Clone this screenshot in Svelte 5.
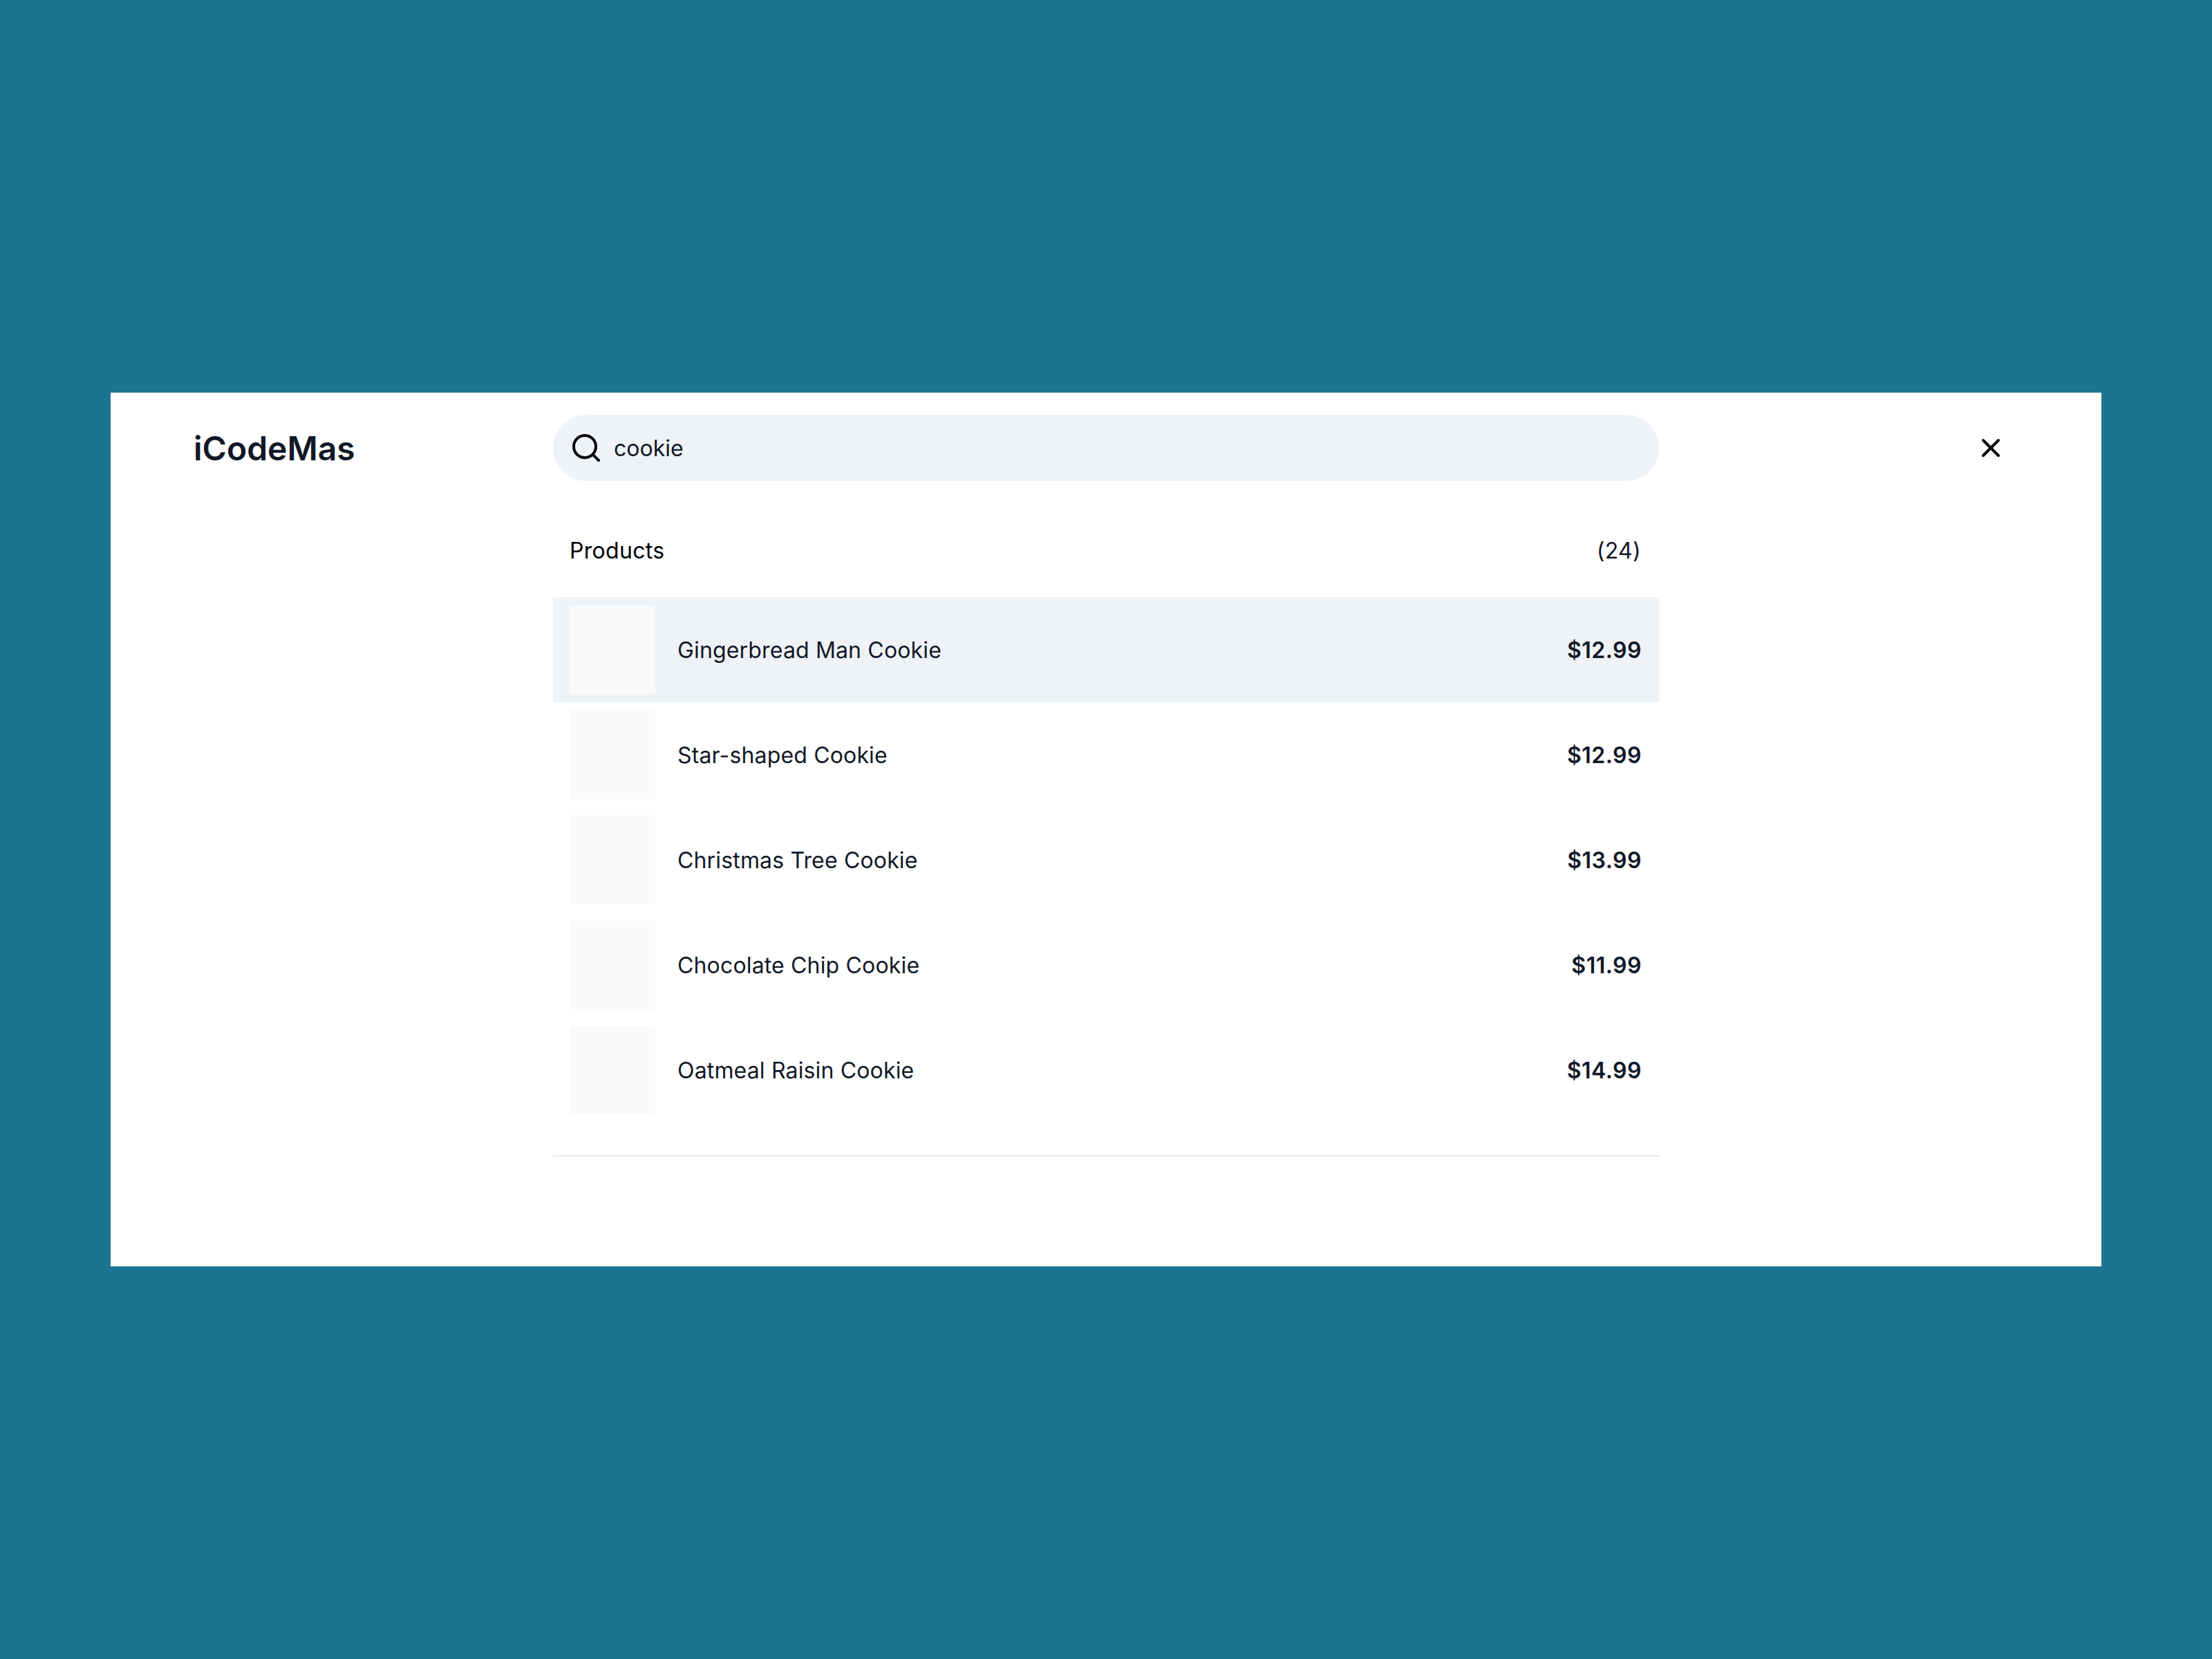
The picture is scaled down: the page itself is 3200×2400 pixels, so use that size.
<script>
  const products = [
    { name: 'Gingerbread Man Cookie', price: '$12.99', active: true },
    { name: 'Star-shaped Cookie', price: '$12.99' },
    { name: 'Christmas Tree Cookie', price: '$13.99' },
    { name: 'Chocolate Chip Cookie', price: '$11.99' },
    { name: 'Oatmeal Raisin Cookie', price: '$14.99' }
  ];
</script>

<div class="page">
  <div class="panel">
    <div class="logo">iCodeMas</div>
    <div class="main">
      <div class="search">
        <svg class="search-icon" viewBox="0 0 24 24" fill="none" stroke="#000" stroke-width="2" stroke-linecap="round" stroke-linejoin="round">
          <circle cx="11" cy="11" r="8" />
          <path d="m21 21-4.35-4.35" />
        </svg>
        <span class="query">cookie</span>
      </div>
      <div class="heading">
        <span class="title">Products</span>
        <span class="count">(24)</span>
      </div>
      <ul class="list">
        {#each products as p}
          <li class="row" class:active={p.active}>
            <div class="thumb"></div>
            <span class="name">{p.name}</span>
            <span class="price">{p.price}</span>
          </li>
        {/each}
      </ul>
    </div>
    <button class="close" aria-label="Close">
      <svg viewBox="0 0 24 24" fill="none" stroke="#000" stroke-width="2" stroke-linecap="round" stroke-linejoin="round">
        <path d="M17.5 6.5 6.5 17.5M6.5 6.5l11 11" />
      </svg>
    </button>
  </div>
</div>

<style>
  :global(body) {
    margin: 0;
    background: #1b7592;
    font-family: Inter, "Liberation Sans", sans-serif;
  }
  .page {
    display: flex;
    justify-content: center;
    padding-top: 568px;
    min-height: 2400px;
    box-sizing: border-box;
  }
  .panel {
    width: 2880px;
    height: 1264px;
    background: #fff;
    display: grid;
    grid-template-columns: 640px 1600px 640px;
    align-items: start;
  }
  .logo {
    margin: 33px 0 0 120px;
    height: 96px;
    line-height: 96px;
    font-size: 48px;
    font-weight: 600;
    color: #111827;
  }
  .main {
    display: flex;
    flex-direction: column;
    border-bottom: 2px solid #e5e7eb;
    padding-top: 32px;
  }
  .search {
    height: 96px;
    border-radius: 48px;
    background: #eff2f6;
    display: flex;
    align-items: center;
    padding-left: 24px;
    gap: 16px;
  }
  .search-icon {
    width: 48px;
    height: 48px;
  }
  .query {
    font-size: 32px;
    color: #111827;
  }
  .heading {
    display: flex;
    justify-content: space-between;
    align-items: center;
    height: 136px;
    padding: 32px 26px 0 24px;
    font-size: 32px;
    letter-spacing: 0.3px;
  }
  .title {
    color: #000;
  }
  .count {
    color: #111827;
  }
  .list {
    list-style: none;
    margin: 0 0 47px;
    padding: 0;
  }
  .row {
    height: 152px;
    display: flex;
    align-items: center;
    padding: 0 25px 0 24px;
  }
  .row.active {
    background: #eff2f6;
  }
  .thumb {
    width: 124px;
    height: 128px;
    background: #fafafa;
    margin-right: 32px;
  }
  .name {
    font-size: 32px;
    letter-spacing: 0.16px;
    color: #111827;
    flex: 1;
  }
  .price {
    font-size: 32px;
    letter-spacing: 0.5px;
    font-weight: 600;
    color: #111827;
  }
  .close {
    justify-self: start;
    margin: 56px 0 0 456px;
    width: 48px;
    height: 48px;
    padding: 0;
    border: 0;
    background: none;
  }
  .close svg {
    display: block;
    width: 48px;
    height: 48px;
  }
</style>
